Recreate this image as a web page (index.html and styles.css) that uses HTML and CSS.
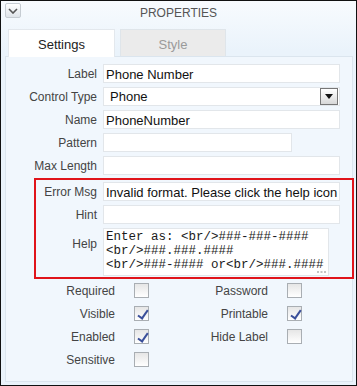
FILE: index.html
```html
<!DOCTYPE html>
<html lang="en">
<head>
    <meta charset="UTF-8">
    <title>Properties</title>
    <link rel="stylesheet" href="styles.css">
</head>
<body>
    <div class="frame">
        <div class="header">
            <span class="collapse-btn">
                <svg width="10" height="6" viewBox="0 0 10 6"><path d="M1 1 L5 5 L9 1" fill="none" stroke="#555" stroke-width="1.6"/></svg>
            </span>
            <span class="title">PROPERTIES</span>
        </div>

        <div class="tabs">
            <div class="tab active">Settings</div>
            <div class="tab">Style</div>
        </div>

        <div class="panel">
            <div class="row">
                <label>Label</label>
                <div class="field"><input type="text" value="Phone Number"></div>
            </div>
            <div class="row">
                <label>Control Type</label>
                <div class="field select">
                    <span>Phone</span>
                    <span class="select-btn">
                        <svg width="8" height="5" viewBox="0 0 8 5"><path d="M0 0 H8 L4 5 Z" fill="#111"/></svg>
                    </span>
                </div>
            </div>
            <div class="row">
                <label>Name</label>
                <div class="field"><input type="text" value="PhoneNumber"></div>
            </div>
            <div class="row">
                <label>Pattern</label>
                <div class="field short"><input type="text"></div>
            </div>
            <div class="row">
                <label>Max Length</label>
                <div class="field"><input type="text"></div>
            </div>

            <div class="highlight">
                <div class="row">
                    <label>Error Msg</label>
                    <div class="field"><input type="text" value="Invalid format. Please click the help icon and follow one of the formats"></div>
                </div>
                <div class="row">
                    <label>Hint</label>
                    <div class="field"><input type="text"></div>
                </div>
                <div class="row help-row">
                    <label>Help</label>
                    <div class="field help">
                        <div class="help-text">Enter as: &lt;br/&gt;###-###-####<br>&lt;br/&gt;###.###.####<br>&lt;br/&gt;###-#### or&lt;br/&gt;###.####</div>
                        <svg class="grip" width="9" height="4" viewBox="0 0 9 4">
                            <rect x="0" y="1" width="2" height="2" fill="#c4c4c4"/>
                            <rect x="3.5" y="1" width="2" height="2" fill="#c4c4c4"/>
                            <rect x="7" y="1" width="2" height="2" fill="#c4c4c4"/>
                        </svg>
                    </div>
                </div>
            </div>

            <div class="checks">
                <span class="check-label">Required</span><span class="box"></span>
                <span class="check-label">Password</span><span class="box"></span>
                <span class="check-label">Visible</span><span class="box checked"></span>
                <span class="check-label">Printable</span><span class="box checked"></span>
                <span class="check-label">Enabled</span><span class="box checked"></span>
                <span class="check-label">Hide Label</span><span class="box"></span>
                <span class="check-label">Sensitive</span><span class="box"></span>
            </div>
        </div>
    </div>
</body>
</html>
```

FILE: styles.css
```css
* {
    margin: 0;
    padding: 0;
    box-sizing: border-box;
}

body {
    font-family: 'Liberation Sans', Arial, sans-serif;
    background: #ffffff;
}

.frame {
    width: 357px;
    height: 386px;
    border: 1px solid #111;
    background: linear-gradient(#f8fbfe, #eaf3fb 50px, #eaf3fb);
    overflow: hidden;
}

.header {
    height: 28px;
    display: flex;
    justify-content: center;
    position: relative;
}

.collapse-btn {
    position: absolute;
    left: 4px;
    top: 2px;
    width: 16px;
    height: 15px;
    border: 1px solid #c6ccd2;
    border-radius: 2px;
    background: linear-gradient(#ffffff, #dfe4e9);
    display: flex;
    align-items: center;
    justify-content: center;
}

.title {
    font-size: 12px;
    color: #555;
    margin-top: 5px;
}

.tabs {
    display: flex;
    gap: 5px;
    padding-left: 7px;
}

.tab {
    width: 106px;
    height: 27px;
    border: 1px solid #dfe5ea;
    border-bottom: none;
    background: #ebebeb;
    color: #9a9a9a;
    font-size: 13px;
    display: flex;
    align-items: center;
    justify-content: center;
    padding-top: 2px;
}

.tab.active {
    width: 107px;
    background: #ffffff;
    color: #222;
    border-color: #e3e8ed;
    height: 28px;
    margin-bottom: -1px;
    position: relative;
}

.panel {
    margin: 0 3px 0 4px;
    height: 326px;
    background: #f1f7fd;
    border: 1px solid #dbe5ee;
    padding-top: 5px;
}

.row {
    display: flex;
    align-items: center;
    height: 23px;
}

.row label {
    width: 97px;
    text-align: right;
    padding-right: 6px;
    font-size: 12px;
    color: #444;
}

.field {
    width: 237px;
    height: 19px;
    border: 1px solid #e2e6ea;
    background: #ffffff;
}

.field.short {
    width: 189px;
}

.field input {
    width: 100%;
    height: 100%;
    border: none;
    outline: none;
    background: transparent;
    padding-left: 2px;
    font-family: 'Liberation Sans', Arial, sans-serif;
    font-size: 13px;
    color: #111;
}

.select {
    display: flex;
    align-items: center;
    justify-content: space-between;
    padding-left: 6px;
    font-size: 13px;
    color: #111;
}

.select-btn {
    width: 18px;
    height: 17px;
    margin-right: 1px;
    border: 1px solid #777;
    background: linear-gradient(#ffffff, #d8d8d8);
    display: flex;
    align-items: center;
    justify-content: center;
}

.highlight {
    margin: 1px -2px 0 28px;
    border: 2px solid #e0141b;
    padding-bottom: 1px;
}

.highlight .row label {
    width: 67px;
}

.help-row {
    height: 50px;
    align-items: flex-end;
}

.help-row label {
    align-self: flex-start;
    margin-top: 11px;
}

.help {
    width: 226px;
    height: 48px;
    position: relative;
    overflow: hidden;
}

.help-text {
    font-family: 'Liberation Mono', 'Courier New', monospace;
    font-size: 12.5px;
    line-height: 14px;
    color: #1a1a1a;
    padding: 1px 0 0 2px;
    white-space: nowrap;
}

.grip {
    position: absolute;
    right: 2px;
    bottom: 1px;
}

.checks {
    display: grid;
    grid-template-columns: 109px 15px 100px 15px;
    grid-auto-rows: 23px;
    column-gap: 19px;
    align-items: center;
}

.check-label {
    text-align: right;
    font-size: 12px;
    color: #444;
}

.box {
    width: 15px;
    height: 15px;
    border: 1px solid #a9aeb3;
    background: linear-gradient(#e6e6e6, #ffffff);
    position: relative;
}

.box.checked::after {
    content: "";
    position: absolute;
    left: 5px;
    top: 1px;
    width: 4px;
    height: 9px;
    border-right: 2px solid #3a4f9a;
    border-bottom: 2px solid #3a4f9a;
    transform: rotate(35deg);
}
```
